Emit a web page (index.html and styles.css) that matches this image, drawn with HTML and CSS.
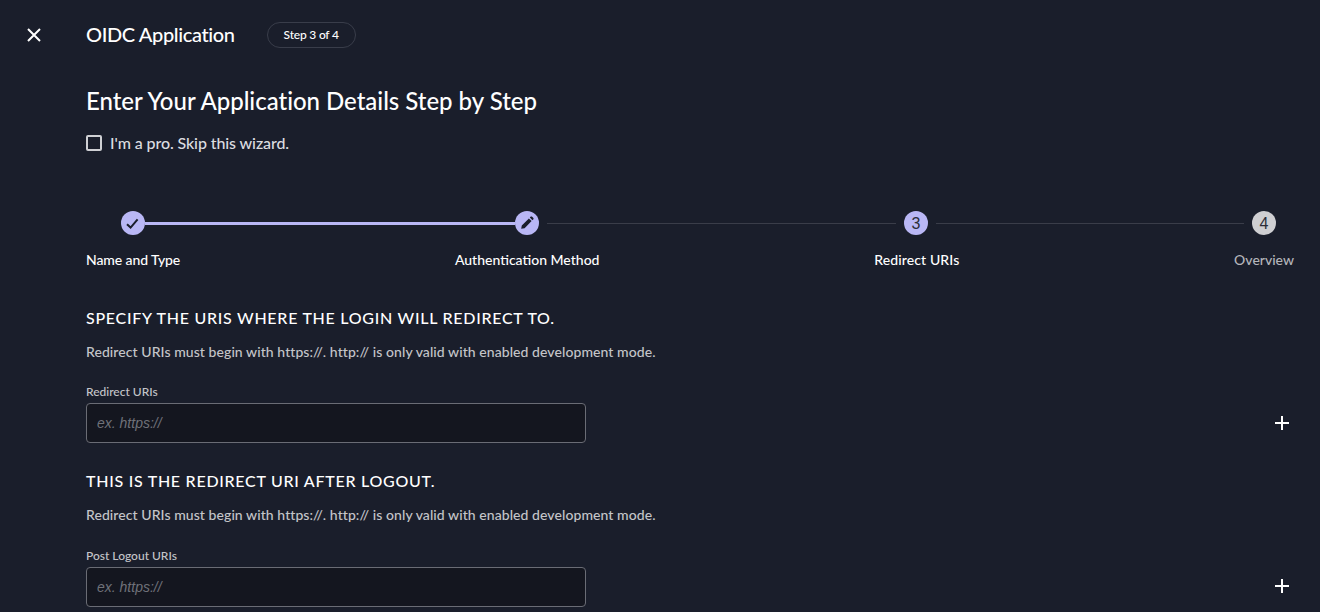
FILE: index.html
```html
<!DOCTYPE html>
<html lang="en">

<head>
    <meta charset="UTF-8">
    <meta name="viewport" content="width=device-width, initial-scale=1.0">
    <title>OIDC Application</title>
    <link rel="stylesheet" href="styles.css">
</head>

<body>
    <div class="page">
        <div class="top-bar">
            <button class="close-btn" aria-label="Close">
                <svg viewBox="0 0 16 16" width="16" height="16">
                    <path d="M2 2 L14 14 M14 2 L2 14" stroke="#fff" stroke-width="2" fill="none" />
                </svg>
            </button>
            <span class="app-title">OIDC Application</span>
            <span class="step-chip">Step 3 of 4</span>
        </div>

        <div class="content">
            <h1 class="wizard-title">Enter Your Application Details Step by Step</h1>
            <label class="skip-row">
                <span class="checkbox"></span>
                <span>I'm a pro. Skip this wizard.</span>
            </label>

            <div class="stepper">
                <div class="track">
                    <span class="dot done">
                        <svg viewBox="0 0 16 16" width="16" height="16">
                            <path d="M2 9.2 L5.6 12.6 L12.6 4.4" stroke="#1a1e2b" stroke-width="2" fill="none" />
                        </svg>
                    </span>
                    <span class="line thick"></span>
                    <span class="dot done">
                        <svg viewBox="0 0 16 16" width="16" height="16">
                            <path d="M2.2 13.8 L2.8 10.4 L9.9 3.4 L12.6 6.1 L5.6 13.2 Z M10.8 2.5 L11.8 1.6 Q12.4 1.2 12.9 1.6 L14.4 3.1 Q14.8 3.6 14.4 4.2 L13.5 5.2 Z" fill="#1a1e2b" />
                        </svg>
                    </span>
                    <span class="line"></span>
                    <span class="dot num">3</span>
                    <span class="line"></span>
                    <span class="dot num todo">4</span>
                </div>
                <div class="labels">
                    <span class="first-label">Name and Type</span>
                    <span>Authentication Method</span>
                    <span class="third-label">Redirect URIs</span>
                    <span class="muted">Overview</span>
                </div>
            </div>

            <section class="uri-block">
                <h2 class="block-title">Specify the URIs where the login will redirect to.</h2>
                <p class="block-desc">Redirect URIs must begin with https://. http:// is only valid with enabled development mode.</p>
                <label class="field-label" for="redirect">Redirect URIs</label>
                <div class="field-row">
                    <input class="text-input" id="redirect" type="text" placeholder="ex. https://">
                    <button class="add-btn" aria-label="Add">
                        <svg viewBox="0 0 14 14" width="14" height="14">
                            <path d="M7 0 V14 M0 7 H14" stroke="#fff" stroke-width="2" fill="none" />
                        </svg>
                    </button>
                </div>
            </section>

            <section class="uri-block second">
                <h2 class="block-title">This is the redirect URI after logout.</h2>
                <p class="block-desc">Redirect URIs must begin with https://. http:// is only valid with enabled development mode.</p>
                <label class="field-label" for="logout">Post Logout URIs</label>
                <div class="field-row">
                    <input class="text-input" id="logout" type="text" placeholder="ex. https://">
                    <button class="add-btn" aria-label="Add">
                        <svg viewBox="0 0 14 14" width="14" height="14">
                            <path d="M7 0 V14 M0 7 H14" stroke="#fff" stroke-width="2" fill="none" />
                        </svg>
                    </button>
                </div>
            </section>
        </div>
    </div>
</body>

</html>
```

FILE: styles.css
```css
html,
body {
    height: 100%;
}

body {
    font-family: 'Lato', sans-serif;
    margin: 0;
    background-color: #1a1e2b;
    color: #fff;
    overflow: hidden;
}

button {
    background: none;
    border: none;
    padding: 0;
    cursor: pointer;
    display: flex;
    align-items: center;
    justify-content: center;
}

.top-bar {
    display: flex;
    align-items: center;
    height: 34px;
    padding: 18px 0 0 26px;
}

.close-btn {
    width: 16px;
    height: 16px;
    margin-right: 44px;
}

.app-title {
    font-size: 20px;
    font-weight: 500;
    letter-spacing: -0.37px;
    margin-bottom: 2px;
}

.step-chip {
    margin-left: 32px;
    height: 24px;
    line-height: 24px;
    padding: 0 16px;
    border: 1px solid #393d4a;
    border-radius: 13px;
    font-size: 12px;
    font-weight: 500;
    letter-spacing: -0.2px;
}

.content {
    padding: 0 26px 0 86px;
}

.wizard-title {
    font-size: 24px;
    line-height: 30px;
    font-weight: 500;
    margin: 34px 0 0;
    letter-spacing: -0.02px;
}

.skip-row {
    display: flex;
    align-items: center;
    gap: 8px;
    margin-top: 17px;
    font-size: 16px;
    font-weight: 500;
    line-height: 20px;
    letter-spacing: -0.1px;
    color: #dcdde0;
}

.checkbox {
    width: 12px;
    height: 12px;
    border: 2px solid #cfd0d4;
    border-radius: 2px;
}

.stepper {
    margin-top: 58px;
}

.track {
    display: grid;
    grid-template-columns: 24px 370px 24px 365px 24px 324px 24px;
    align-items: center;
    padding-left: 35px;
}

.dot {
    width: 24px;
    height: 24px;
    border-radius: 50%;
    background-color: #b9b7f5;
    color: #2b2d38;
    font-family: 'Liberation Sans', sans-serif;
    font-size: 16px;
    display: flex;
    align-items: center;
    justify-content: center;
}

.dot.num {
    box-sizing: border-box;
    padding-top: 2px;
}

.dot.todo {
    background-color: #cfcfd2;
}

.line {
    height: 1px;
    background-color: #3a3d49;
    margin: 0 8px;
}

.line.thick {
    height: 3px;
    margin: 0;
    background-color: #b9b7f5;
}

.labels {
    display: flex;
    justify-content: space-between;
    margin-top: 16px;
    font-size: 14px;
    line-height: 18px;
    font-weight: 500;
}

.first-label {
    letter-spacing: -0.1px;
}

.third-label {
    letter-spacing: 0.12px;
}

.muted {
    color: #b4b5ba;
}

.uri-block {
    margin-top: 39px;
}

.uri-block.second {
    margin-top: 28px;
}

.block-title {
    margin: 0;
    font-size: 16px;
    line-height: 20px;
    font-weight: 500;
    text-transform: uppercase;
    letter-spacing: 0.73px;
}

.block-desc {
    margin: 14px 0 0;
    font-size: 14px;
    font-weight: 500;
    line-height: 20px;
    letter-spacing: 0.07px;
    color: #c4c5c9;
}

.field-label {
    display: block;
    margin-top: 22px;
    font-size: 12px;
    font-weight: 500;
    line-height: 16px;
    color: #c4c5c9;
}

.second .field-label {
    margin-top: 23px;
}

.field-row {
    display: flex;
    align-items: center;
    justify-content: space-between;
    margin-top: 3px;
}

.text-input {
    box-sizing: border-box;
    width: 500px;
    height: 40px;
    padding: 0 10px;
    background-color: #14161f;
    border: 1px solid #6a6c75;
    border-radius: 4px;
    color: #fff;
    font-family: 'Liberation Sans', sans-serif;
    font-size: 14px;
}

.text-input::placeholder {
    color: #6f7179;
    font-style: italic;
    opacity: 1;
}

.add-btn {
    width: 14px;
    height: 14px;
    margin-right: 5px;
}

.second .add-btn {
    margin-bottom: 2px;
}
```
